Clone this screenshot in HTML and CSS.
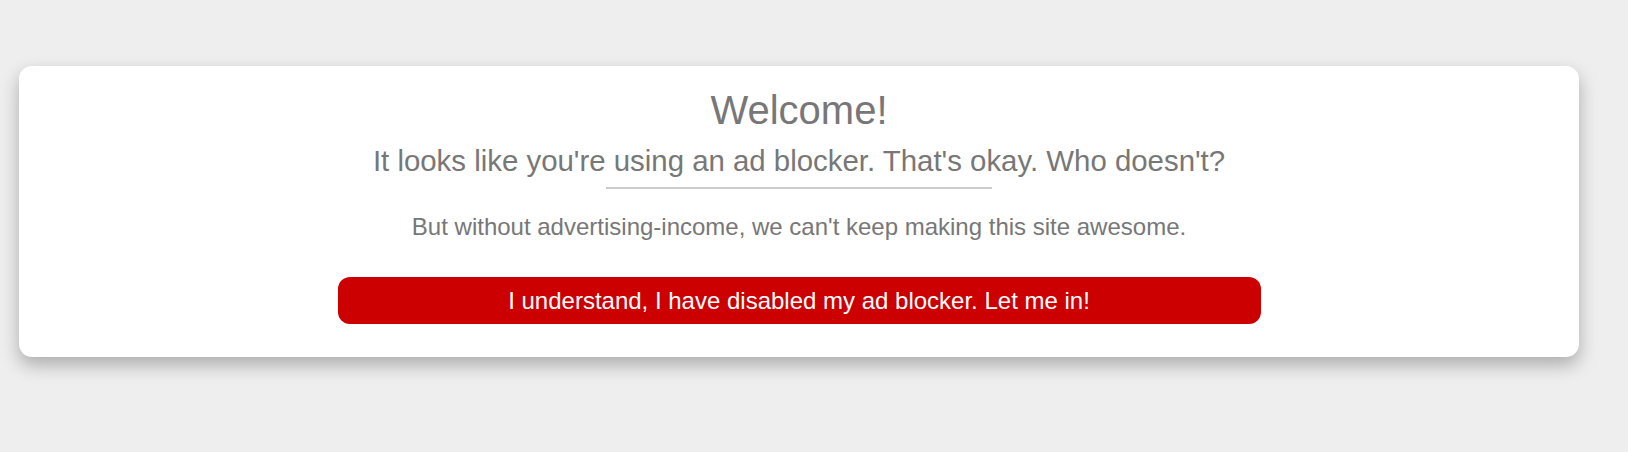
FILE: index.html
```html
<!DOCTYPE html>
<html lang="en">
<head>
<meta charset="utf-8">
<title>Welcome</title>
<link rel="stylesheet" href="styles.css">
</head>
<body>
  <div class="card">
    <h1 class="title">Welcome!</h1>
    <h2 class="subtitle">It looks like you're using an ad blocker. That's okay. Who doesn't?</h2>
    <hr class="divider">
    <p class="message">But without advertising-income, we can't keep making this site awesome.</p>
    <button class="accept" type="button">I understand, I have disabled my ad blocker. Let me in!</button>
  </div>
</body>
</html>
```

FILE: styles.css
```css
html, body {
  margin: 0;
  padding: 0;
  background: #eeeeee;
}

body {
  font-family: "Liberation Sans", Arial, sans-serif;
  color: #777777;
  padding-bottom: 40px;
}

.card {
  box-sizing: border-box;
  width: 1560px;
  margin: 66px 0 0 19px;
  padding: 21px 0 33px;
  background: #ffffff;
  border-radius: 13px;
  box-shadow: 0 8px 18px rgba(0, 0, 0, 0.28);
  display: flex;
  flex-direction: column;
  align-items: center;
}

.title {
  margin: 0;
  font-size: 40px;
  line-height: 46px;
  font-weight: normal;
  color: #777777;
}

.subtitle {
  margin: 11px 0 0;
  font-size: 29.4px;
  line-height: 34px;
  font-weight: normal;
  color: #777777;
}

.divider {
  width: 386px;
  height: 2px;
  margin: 9px 0 0;
  border: 0;
  background: #cccccc;
}

.message {
  margin: 24px 0 0;
  font-size: 24px;
  line-height: 28px;
  color: #777777;
}

.accept {
  width: 923px;
  height: 47px;
  margin-top: 36px;
  padding: 0;
  border: 0;
  border-radius: 12px;
  background: #cc0000;
  color: #ffffff;
  font-family: "Liberation Sans", Arial, sans-serif;
  font-size: 24px;
  line-height: 47px;
  cursor: pointer;
}
```
